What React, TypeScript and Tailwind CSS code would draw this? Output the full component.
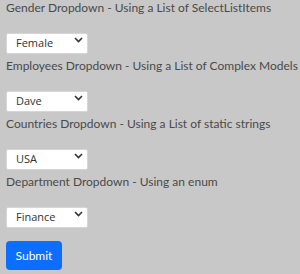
import React, { useState } from 'react';

const genders = ['Male', 'Female'];
const employees = ['John', 'Dave', 'Mary'];
const countries = ['UK', 'USA', 'India'];
const departments = ['IT', 'HR', 'Finance', 'Payroll'];

const Field: React.FC<{
  label: string;
  options: string[];
  value: string;
  onChange: (v: string) => void;
}> = ({ label, options, value, onChange }) => (
  <div className="flex flex-col">
    <label className="h-4 whitespace-nowrap text-[12px] leading-4 text-[#4a4a4a]">{label}</label>
    <div className="relative mt-[13px] h-[21px] w-[82px]">
      <select
        value={value}
        onChange={(e) => onChange(e.target.value)}
        className="h-full w-full appearance-none rounded-[2px] border border-[#d6d6d6] bg-white pl-[9px] text-[11px] text-[#333] outline-none"
        style={{ fontFamily: '"Open Sans", Arial, sans-serif' }}
      >
        {options.map((o) => (
          <option key={o} value={o}>
            {o}
          </option>
        ))}
      </select>
      <svg
        className="pointer-events-none absolute right-[5px] top-[8px] h-[6px] w-[9px]"
        viewBox="0 0 9 6"
        fill="none"
      >
        <path d="M1 1l3.5 3.5L8 1" stroke="#333" strokeWidth="1.6" />
      </svg>
    </div>
  </div>
);

const App: React.FC = () => {
  const [gender, setGender] = useState('Female');
  const [employee, setEmployee] = useState('Dave');
  const [country, setCountry] = useState('USA');
  const [department, setDepartment] = useState('Finance');

  return (
    <div
      className="min-h-[274px] bg-[#c8c8c8] px-[6px]"
      style={{ fontFamily: 'Lato, Arial, sans-serif' }}
    >
      <div className="flex flex-col gap-2">
        <Field label="Gender Dropdown - Using a List of SelectListItems" options={genders} value={gender} onChange={setGender} />
        <Field label="Employees Dropdown - Using a List of Complex Models" options={employees} value={employee} onChange={setEmployee} />
        <Field label="Countries Dropdown - Using a List of static strings" options={countries} value={country} onChange={setCountry} />
        <Field label="Department Dropdown - Using an enum" options={departments} value={department} onChange={setDepartment} />
      </div>
      <button className="mt-[17px] h-[29px] w-[56px] rounded-[4px] bg-[#0d6efd] text-[12px] text-white">
        Submit
      </button>
    </div>
  );
};

export default App;
